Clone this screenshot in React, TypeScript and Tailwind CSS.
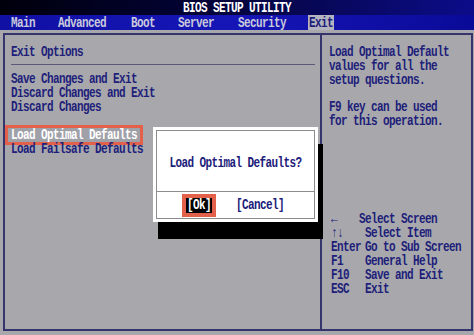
const MENU = [
  { label: "Main", left: "ml-[11px]" },
  { label: "Advanced", left: "ml-[23px]" },
  { label: "Boot", left: "ml-[25px]" },
  { label: "Server", left: "ml-[23px]" },
  { label: "Security", left: "ml-[24px]" },
];

const KEYS = [
  { key: "←", desc: "Select Screen", shift: "ml-[-6px]" },
  { key: "↑↓", desc: "Select Item", shift: "" },
  { key: "Enter", desc: "Go to Sub Screen", shift: "" },
  { key: "F1", desc: "General Help", shift: "" },
  { key: "F10", desc: "Save and Exit", shift: "" },
  { key: "ESC", desc: "Exit", shift: "" },
];

// BIOS glyphs are tall and narrow: stretch the mono font vertically
function T({ children, className = "" }: { children: React.ReactNode; className?: string }) {
  return <span className={`inline-block scale-y-125 ${className}`}>{children}</span>;
}

export default function App() {
  return (
    <div className="relative w-[474px] h-[335px] overflow-hidden bg-[#a8a8ac] font-['Liberation_Mono',monospace] font-bold text-[11px] leading-[14px] tracking-[-0.6px] text-[#20207a]">
      {/* Title */}
      <div className="h-[15px] flex items-center justify-center bg-gradient-to-r from-[#00000c] via-[#050540] to-[#0c0c8a] text-white">
        <T>BIOS SETUP UTILITY</T>
      </div>

      {/* Menu bar */}
      <div className="h-[15px] flex items-center bg-gradient-to-r from-[#1010a4] via-[#1616b8] to-[#0a0a98] text-[#c9c9dc]">
        {MENU.map((m) => (
          <T key={m.label} className={m.left}>
            {m.label}
          </T>
        ))}
        <span className="ml-[22px] h-full flex items-center px-[1px] bg-[#b4b4c0] text-[#20207a]">
          <T>Exit</T>
        </span>
      </div>

      {/* Frame */}
      <div className="ml-[3px] mt-[3px] w-[470px] h-[298px] border-2 border-[#35356e] flex">
        {/* Left panel */}
        <div className="w-[317px] border-r-2 border-[#35356e] pt-[10px] pl-[6px] pr-[5px]">
          <div><T>Exit Options</T></div>
          <div className="mt-[5px] h-px bg-[#5a5a78]" />
          <div className="mt-[7px]"><T>Save Changes and Exit</T></div>
          <div><T>Discard Changes and Exit</T></div>
          <div><T>Discard Changes</T></div>
          <div className="mt-[14px]">
            <span className="inline-block -ml-[3px] px-[3px] text-white bg-[#a0a0a8] outline-[3px] outline-solid outline-[#e3604a]">
              <T>Load Optimal Defaults</T>
            </span>
          </div>
          <div><T>Load Failsafe Defaults</T></div>
        </div>

        {/* Right panel */}
        <div className="flex-1 pt-[10px] pl-[7px]">
          <div><T>Load Optimal Default</T></div>
          <div><T>values for all the</T></div>
          <div><T>setup questions.</T></div>
          <div className="mt-[13px]"><T>F9 key can be used</T></div>
          <div><T>for this operation.</T></div>

          <div className="mt-[84px] pl-[2px]">
            {KEYS.map((k) => (
              <div key={k.key} className="flex">
                <T className="w-[34px]">{k.key}</T>
                <T className={k.shift}>{k.desc}</T>
              </div>
            ))}
          </div>
        </div>
      </div>

      {/* Dialog */}
      <div className="absolute left-[153px] top-[127px] w-[165px] h-[95px] bg-white p-[3px] shadow-[5px_17px_0_#000]">
        <div className="h-full border border-[#8c8c8c] flex flex-col">
          <div className="h-[60px] pt-[4px] flex items-center justify-center">
            <T>Load Optimal Defaults?</T>
          </div>
          <div className="flex-1 border-t border-[#8c8c8c] flex items-center pl-[29px]">
            <span className="px-[1px] bg-black text-white outline-[4px] outline-solid outline-[#e3604a] leading-[15px]">
              <T>[Ok]</T>
            </span>
            <T className="ml-[24px]">[Cancel]</T>
          </div>
        </div>
      </div>
    </div>
  );
}
